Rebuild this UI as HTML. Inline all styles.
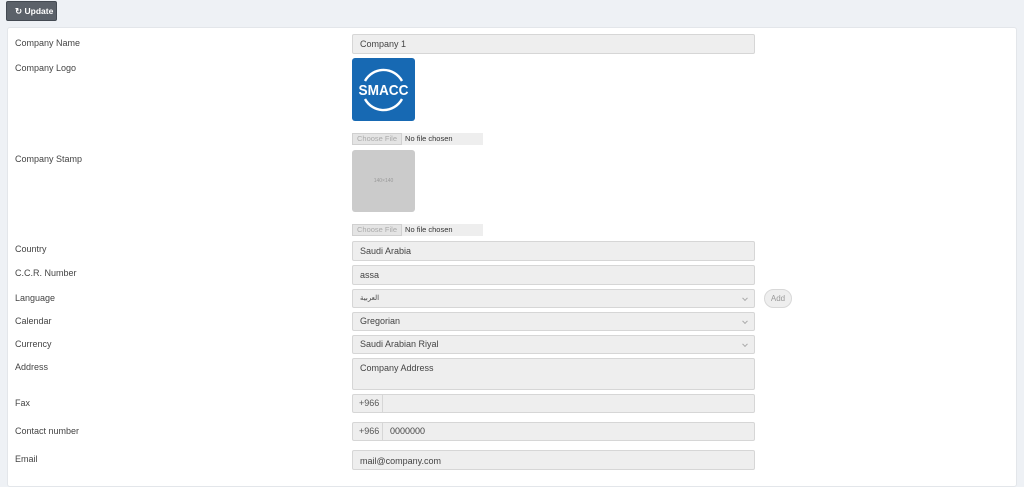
<!DOCTYPE html>
<html><head><style>
*{box-sizing:border-box;margin:0;padding:0}
body{width:1024px;height:466px;overflow:hidden;background:#eef1f5;font-family:"Liberation Sans","Noto Sans CJK SC",sans-serif;font-size:9px;color:#333;position:relative}
.abs{position:absolute}
.btn{left:6px;top:1px;width:51px;height:20px;background:#5b6169;border:1px solid #444a52;border-radius:2px;color:#fff;font-size:8.5px;font-weight:bold;line-height:18px;padding-left:8px}
.panel{left:7px;top:27px;width:1010px;height:460px;background:#fff;border:1px solid #e3e6ea;border-radius:3px}
.lbl{left:15px;color:#444;font-size:9px}
.inp{left:352px;width:403px;background:#eee;border:1px solid #d6d6d6;border-radius:2px;padding-left:7px;font-size:9px;color:#444}
.chev{position:absolute;right:7px;top:50%;width:4px;height:4px;border-right:1px solid #aaa;border-bottom:1px solid #aaa;transform:translateY(-70%) rotate(45deg)}
.pre{position:absolute;left:0;top:0;bottom:0;width:30px;border-right:1px solid #d6d6d6;padding-left:6px;color:#555}
.file{left:352px;width:131px;height:12px;background:#eee;font-size:7.5px;line-height:12px}
.file span{display:inline-block;background:#e4e4e4;border:1px solid #d0d0d0;color:#aaa;padding:0 4px;height:12px;line-height:10px;margin-right:3px}
</style></head><body>
<div class="abs btn">&#x21bb; Update</div>
<div class="abs panel"></div>
<div class="abs lbl" style="top:38px">Company Name</div>
<div class="abs inp" style="top:34px;height:20px;line-height:18px">Company 1</div>
<div class="abs lbl" style="top:63px">Company Logo</div>
<div class="abs" style="left:352px;top:58px;width:63px;height:63px;background:#1769b3;border-radius:3px">
<svg width="63" height="63" viewBox="0 0 63 63"><path d="M13 23 A21 21 0 0 1 50 23" stroke="#fff" stroke-width="2.4" fill="none"/><path d="M13 41 A21 21 0 0 0 50 41" stroke="#fff" stroke-width="2.4" fill="none"/><text x="31.5" y="37" text-anchor="middle" fill="#fff" font-family="Liberation Sans" font-weight="bold" font-size="15" textLength="50" lengthAdjust="spacingAndGlyphs">SMACC</text></svg></div>
<div class="abs file" style="top:133px"><span>Choose File</span>No file chosen</div>
<div class="abs lbl" style="top:154px">Company Stamp</div>
<div class="abs" style="left:352px;top:150px;width:63px;height:62px;background:#cbcbcb;border-radius:3px;color:#999;font-size:5px;text-align:center;line-height:62px">140×140</div>
<div class="abs file" style="top:224px"><span>Choose File</span>No file chosen</div>
<div class="abs lbl" style="top:244px">Country</div>
<div class="abs inp" style="top:241px;height:20px;line-height:18px">Saudi Arabia</div>
<div class="abs lbl" style="top:268px">C.C.R. Number</div>
<div class="abs inp" style="top:265px;height:20px;line-height:18px">assa</div>
<div class="abs lbl" style="top:293px">Language</div>
<div class="abs inp" style="top:289px;height:19px;line-height:17px;font-size:7px">العربية<i class="chev"></i></div>
<div class="abs" style="left:764px;top:289px;width:28px;height:19px;border-radius:10px;background:#eee;border:1px solid #d8d8d8;color:#999;font-size:8px;text-align:center;line-height:17px">Add</div>
<div class="abs lbl" style="top:316px">Calendar</div>
<div class="abs inp" style="top:312px;height:19px;line-height:17px">Gregorian<i class="chev"></i></div>
<div class="abs lbl" style="top:339px">Currency</div>
<div class="abs inp" style="top:335px;height:19px;line-height:17px">Saudi Arabian Riyal<i class="chev"></i></div>
<div class="abs lbl" style="top:362px">Address</div>
<div class="abs inp" style="top:358px;height:32px;padding-top:4px">Company Address</div>
<div class="abs lbl" style="top:398px">Fax</div>
<div class="abs inp" style="top:394px;height:19px;line-height:17px"><span class="pre">+966</span></div>
<div class="abs lbl" style="top:426px">Contact number</div>
<div class="abs inp" style="top:422px;height:19px;line-height:17px;padding-left:37px"><span class="pre">+966</span>0000000</div>
<div class="abs lbl" style="top:454px">Email</div>
<div class="abs inp" style="top:450px;height:20px;line-height:20px">mail@company.com</div>
</body></html>
